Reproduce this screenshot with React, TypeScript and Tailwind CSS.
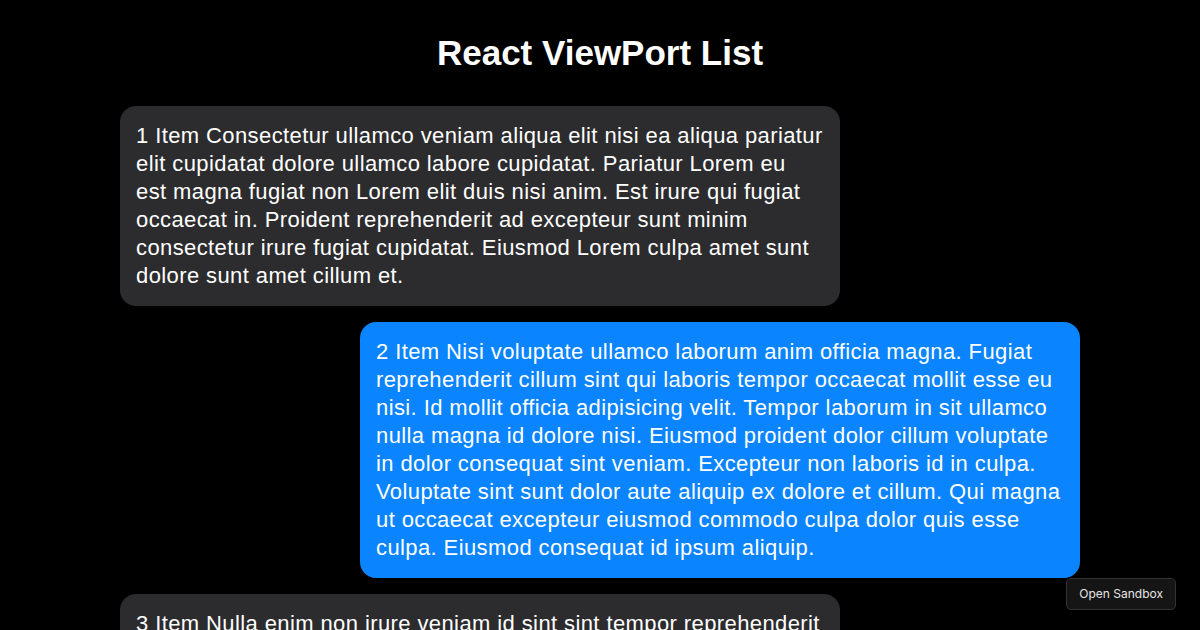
import React from "react";

const items = [
  {
    id: 1,
    text: "1 Item Consectetur ullamco veniam aliqua elit nisi ea aliqua pariatur elit cupidatat dolore ullamco labore cupidatat. Pariatur Lorem eu est\u00a0magna fugiat non Lorem elit duis nisi anim. Est irure qui fugiat occaecat in. Proident reprehenderit ad excepteur sunt minim consectetur irure fugiat cupidatat. Eiusmod Lorem culpa amet sunt dolore sunt amet cillum et.",
  },
  {
    id: 2,
    text: "2 Item Nisi voluptate ullamco laborum anim officia magna. Fugiat reprehenderit cillum sint qui laboris tempor occaecat mollit esse eu nisi. Id mollit officia adipisicing velit. Tempor laborum in sit ullamco nulla magna id dolore nisi. Eiusmod proident dolor cillum voluptate in dolor consequat sint veniam. Excepteur non laboris id in culpa. Voluptate sint sunt dolor aute aliquip ex dolore et cillum. Qui magna ut occaecat excepteur eiusmod commodo culpa dolor quis esse culpa. Eiusmod consequat id ipsum aliquip.",
  },
  {
    id: 3,
    text: "3 Item Nulla enim non irure veniam id sint sint tempor reprehenderit laboris. Culpa esse anim deserunt minim elit ad magna non ea. Officia ex irure nulla duis dolore consequat exercitation. Ut proident veniam ex exercitation. Lorem ipsum incididunt sint irure.",
  },
];

export default function App() {
  return (
    <div
      className="relative w-full h-[630px] overflow-hidden bg-black text-white"
      style={{ fontFamily: '"Liberation Sans", Arial, sans-serif' }}
    >
      <h1 className="pt-[31px] text-center text-[35px] leading-[44px] font-bold">
        React ViewPort List
      </h1>
      <div className="mx-auto mt-[31px] flex w-[960px] flex-col gap-4">
        {items.map((it, i) => (
          <div
            key={it.id}
            className={
              i % 2 === 1
                ? "ml-auto w-[720px] rounded-2xl bg-[#0a84ff] p-4 text-[22px] leading-[28px] tracking-[0.4px]"
                : "mr-auto w-[720px] rounded-2xl bg-[#2c2c2e] p-4 text-[22px] leading-[28px] tracking-[0.4px]"
            }
          >
            {it.text}
          </div>
        ))}
      </div>
      <button
        className="absolute right-[24px] bottom-[20px] h-[32px] rounded-[5px] border border-[#333] bg-[#151515] px-[12px] text-[12px] text-[#e5e5e5]"
        style={{ fontFamily: "Inter, sans-serif" }}
      >
        Open Sandbox
      </button>
    </div>
  );
}
